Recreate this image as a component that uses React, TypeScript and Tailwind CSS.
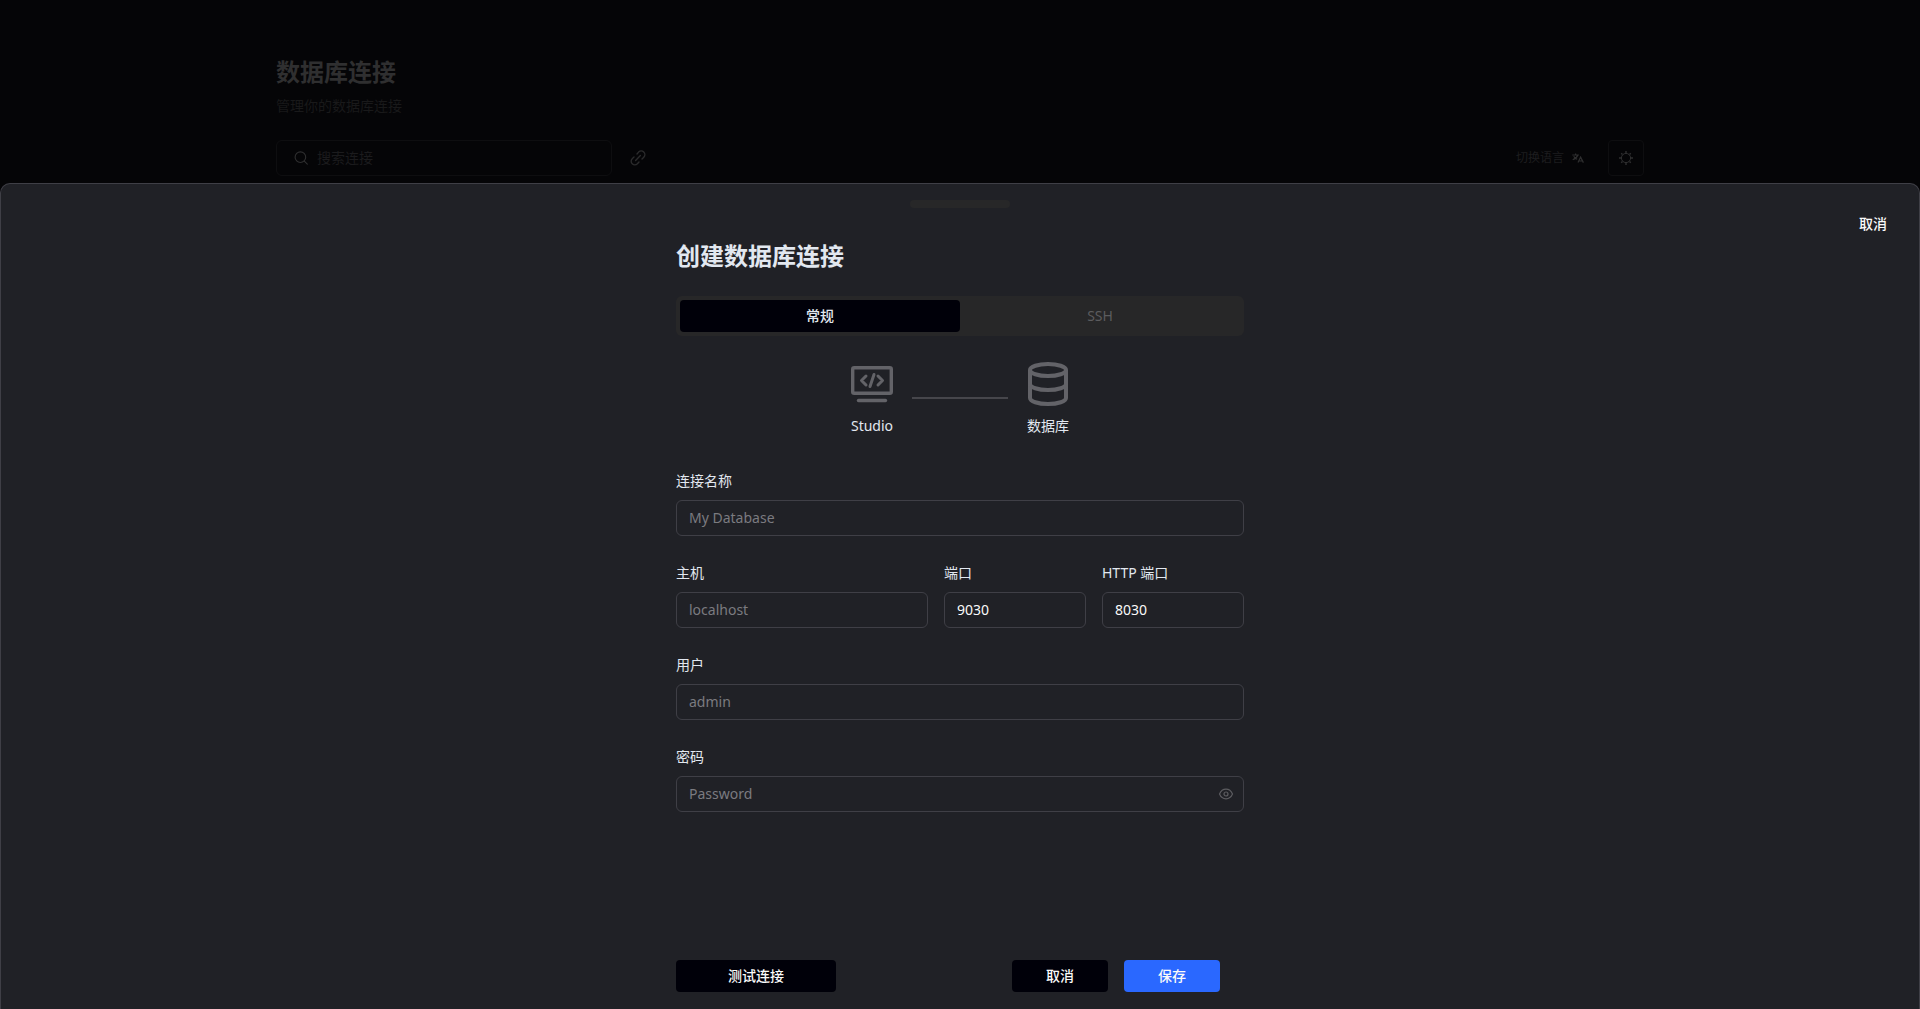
import { useState } from 'react';
import type { InputHTMLAttributes, ReactNode } from 'react';

interface FieldProps extends InputHTMLAttributes<HTMLInputElement> {
  id: string;
  label: string;
  children?: ReactNode;
}

function Field({ id, label, children, ...props }: FieldProps) {
  return (
    <div className="flex flex-col gap-2.5">
      <label htmlFor={id} className="text-sm leading-[18px] text-slate-200">{label}</label>
      <div className="relative">
        <input
          id={id}
          className="block h-9 w-full rounded-md border border-[#3f3f46] bg-transparent px-3 pb-0.5 text-sm text-neutral-50 placeholder:text-[#7b7b80] focus:outline-none"
          {...props}
        />
        {children}
      </div>
    </div>
  );
}

function SearchIcon() {
  return (
    <svg className="size-4" viewBox="0 0 16 16" fill="none" stroke="currentColor" strokeWidth="1.1" strokeLinecap="round">
      <circle cx="7.4" cy="7.2" r="5.3" />
      <path d="m11.3 11.1 3 3" />
    </svg>
  );
}

function LinkIcon() {
  return (
    <svg className="size-4" viewBox="0 0 16 16" fill="none" stroke="currentColor" strokeWidth="1.4" strokeLinecap="round" strokeLinejoin="round">
      <path d="m5.6 10.4 4.8-4.8" />
      <path d="m7 4 1.6-1.9a3.6 3.6 0 0 1 5.2 5.1L12 9" />
      <path d="m9 12-1.6 1.8a3.6 3.6 0 0 1-5.2-5.1L4 7" />
    </svg>
  );
}

function TranslateIcon() {
  return (
    <svg className="size-3" viewBox="0 0 12 12" fill="none" stroke="currentColor" strokeWidth="1.2">
      <path d="M.3 3h6.6M3.6 1.6V3M5.7 3.2C5 5.2 3.2 6.8.7 7.8M1.7 4.2c.8 1.5 2 2.5 3.5 3.1" />
      <path d="m6 10.6 2.6-5.4 2.8 5.4M6.9 9h3.6" />
    </svg>
  );
}

function SunIcon() {
  return (
    <svg className="size-4" viewBox="0 0 16 16" fill="none" stroke="currentColor">
      <circle cx="8" cy="8" r="4.6" />
      <path strokeWidth="1.4" d="M8 1v2M8 13v2M1 8h2M13 8h2M3.2 3.2l1.3 1.3M11.5 11.5l1.3 1.3M3.2 12.8l1.3-1.3M11.5 4.5l1.3-1.3" />
    </svg>
  );
}

function StudioIcon() {
  return (
    <svg className="size-12" viewBox="0 0 48 48" fill="none" stroke="currentColor" strokeWidth="3.4" strokeLinecap="round" strokeLinejoin="round">
      <rect x="4.7" y="7.7" width="38.6" height="25.6" rx="1.5" />
      <path d="M10.5 40.5h27" />
      <path strokeWidth="3" d="m18 16-4.5 4.5L18 25M30 16l4.5 4.5L30 25M26 14.5l-4 12" />
    </svg>
  );
}

function DatabaseIcon() {
  return (
    <svg className="size-12" viewBox="0 0 48 48" fill="none" stroke="currentColor" strokeWidth="4">
      <ellipse cx="24" cy="10" rx="18" ry="6" />
      <path d="M6 10v28c0 3.3 8 6 18 6s18-2.7 18-6V10" />
      <path d="M6 24c0 3.3 8 6 18 6s18-2.7 18-6" />
    </svg>
  );
}

function EyeIcon() {
  return (
    <svg className="size-4" viewBox="0 0 16 16" fill="none" stroke="currentColor" strokeWidth="1.2">
      <path d="M1.5 8C2.8 5 5.2 3.2 8 3.2S13.2 5 14.5 8c-1.3 3-3.7 4.8-6.5 4.8S2.8 11 1.5 8Z" />
      <circle cx="8" cy="8" r="2" />
    </svg>
  );
}

function ConnectionsPage() {
  return (
    <div className="mx-auto w-full max-w-[1400px] px-4 pt-14">
      <h1 className="text-2xl font-bold text-[#2f2f30]">数据库连接</h1>
      <p className="mt-2 text-sm text-[#19191a]">管理你的数据库连接</p>
      <div className="mt-6 flex items-center justify-between">
        <div className="flex items-center gap-4">
          <label className="flex h-9 w-[336px] items-center gap-2 rounded-md border border-[#0e0e10] px-4 text-[#2f2f30]">
            <SearchIcon />
            <input
              type="search"
              aria-label="搜索连接"
              placeholder="搜索连接"
              className="min-w-0 flex-1 bg-transparent text-sm placeholder:text-[#1b1b1d] focus:outline-none"
            />
          </label>
          <button type="button" aria-label="新建连接" className="p-0.5 text-[#2b2b2c]">
            <LinkIcon />
          </button>
        </div>
        <div className="flex items-center gap-6">
          <button type="button" className="flex items-center gap-2 text-xs text-[#1d1d1f]">
            切换语言
            <span className="text-[#2f2f30]"><TranslateIcon /></span>
          </button>
          <button type="button" aria-label="切换主题" className="flex size-9 items-center justify-center rounded-sm border border-[#0e0e10] text-[#2f2f30]">
            <SunIcon />
          </button>
        </div>
      </div>
    </div>
  );
}

function CreateConnectionDrawer() {
  const [tab, setTab] = useState('general');
  const [showPassword, setShowPassword] = useState(false);

  const tabClass = (name: string) =>
    tab === name ? 'bg-[#000009] font-medium text-slate-200' : 'text-[#5c5c5e]';

  return (
    <section role="dialog" aria-labelledby="drawer-title" className="relative mt-[7px] flex flex-1 flex-col rounded-t-[10px] border border-b-0 border-[#3f3f46] bg-[#202126]">
      <div className="mx-auto mt-4 h-2 w-[100px] rounded-full bg-[#272728]" />
      <button type="button" className="absolute right-8 top-[30px] text-sm font-medium leading-5 text-neutral-50">取消</button>

      <form className="mx-auto flex w-[568px] max-w-full flex-1 flex-col pb-[17px]" onSubmit={(e) => e.preventDefault()}>
        <h2 id="drawer-title" className="mt-8 text-2xl font-bold text-slate-200">创建数据库连接</h2>

        <div role="tablist" className="mt-6 grid h-10 grid-cols-2 rounded-md bg-[#272728] p-1 text-sm">
          <button type="button" role="tab" aria-selected={tab === 'general'} onClick={() => setTab('general')} className={`rounded-sm ${tabClass('general')}`}>
            常规
          </button>
          <button type="button" role="tab" aria-selected={tab === 'ssh'} onClick={() => setTab('ssh')} className={`rounded-sm ${tabClass('ssh')}`}>
            SSH
          </button>
        </div>

        <div className="mt-6 flex items-center justify-center gap-4 text-sm leading-5 text-slate-200">
          <div className="flex w-12 flex-col items-center gap-2">
            <span className="text-[#636368]"><StudioIcon /></span>
            Studio
          </div>
          <div className="h-0.5 w-24 bg-[#46464b]" />
          <div className="flex w-12 flex-col items-center gap-2">
            <span className="text-[#636368]"><DatabaseIcon /></span>
            数据库
          </div>
        </div>

        <div className="mt-9 flex flex-col gap-7">
          <Field id="name" label="连接名称" placeholder="My Database" />
          <div className="grid grid-cols-[252px_1fr_1fr] gap-4">
            <Field id="host" label="主机" placeholder="localhost" />
            <Field id="port" label="端口" defaultValue="9030" />
            <Field id="http-port" label="HTTP 端口" defaultValue="8030" />
          </div>
          <Field id="user" label="用户" placeholder="admin" />
          <Field id="password" label="密码" placeholder="Password" type={showPassword ? 'text' : 'password'}>
            <button
              type="button"
              aria-label="显示密码"
              onClick={() => setShowPassword(!showPassword)}
              className="absolute inset-y-0 right-0 flex items-center px-2.5 text-[#5c5c60]"
            >
              <EyeIcon />
            </button>
          </Field>
        </div>

        <div className="mt-auto flex items-center justify-between pr-6 text-sm font-medium text-neutral-50">
          <button type="button" className="h-8 w-40 rounded-sm bg-[#000009]">测试连接</button>
          <div className="flex gap-4">
            <button type="button" className="h-8 w-24 rounded-sm bg-[#000009]">取消</button>
            <button type="submit" className="h-8 w-24 rounded-sm bg-[#2a68ff]">保存</button>
          </div>
        </div>
      </form>
    </section>
  );
}

export default function App() {
  return (
    <div className="flex min-h-screen flex-col bg-[#050507] font-['Noto_Sans','Noto_Sans_CJK_SC',sans-serif]">
      <ConnectionsPage />
      <CreateConnectionDrawer />
    </div>
  );
}
